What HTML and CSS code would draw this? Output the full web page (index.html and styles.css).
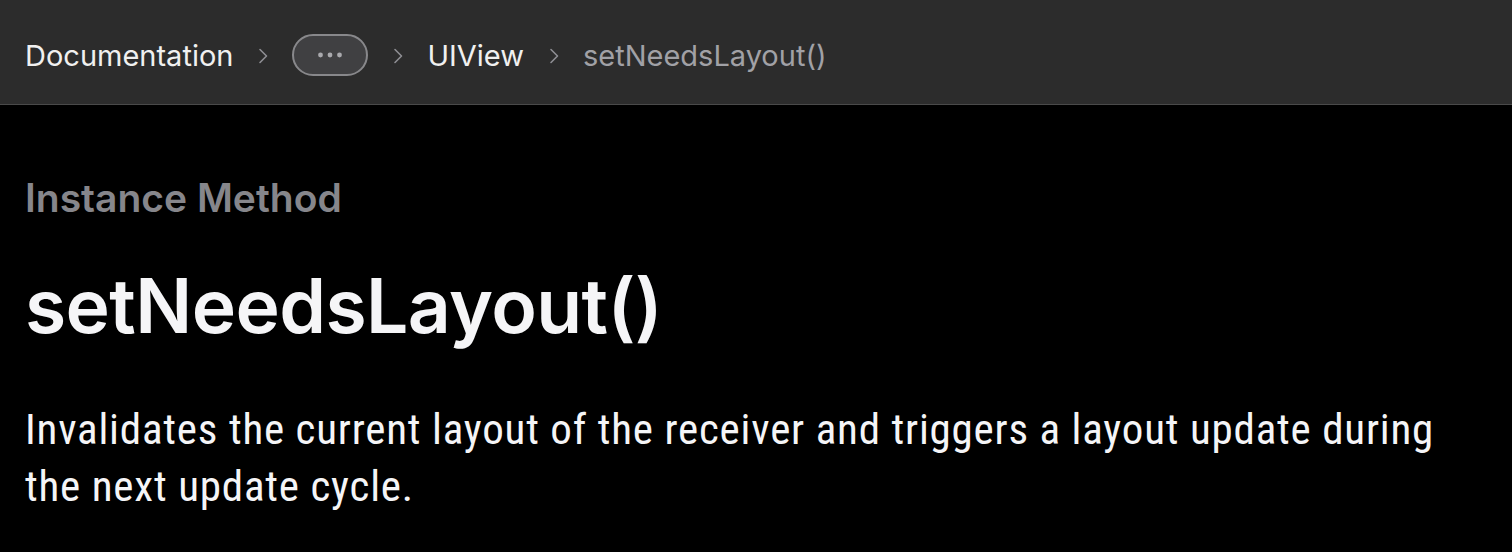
FILE: index.html
```html
<!DOCTYPE html>
<html lang="en">
<head>
<meta charset="utf-8">
<title>setNeedsLayout()</title>
<link rel="stylesheet" href="styles.css">
</head>
<body>
<nav class="crumbs">
  <span class="crumb">Documentation</span>
  <svg class="sep" width="10" height="16" viewBox="0 0 10 16"><path d="M2 1.5 L8.5 8 L2 14.5"/></svg>
  <span class="more"><svg width="24" height="6" viewBox="0 0 24 6"><circle cx="2.5" cy="3" r="2.4"/><circle cx="12" cy="3" r="2.4"/><circle cx="21.5" cy="3" r="2.4"/></svg></span>
  <svg class="sep" width="10" height="16" viewBox="0 0 10 16"><path d="M2 1.5 L8.5 8 L2 14.5"/></svg>
  <span class="crumb">UIView</span>
  <svg class="sep" width="10" height="16" viewBox="0 0 10 16"><path d="M2 1.5 L8.5 8 L2 14.5"/></svg>
  <span class="crumb current">setNeedsLayout()</span>
</nav>
<main class="content">
  <div class="eyebrow">Instance Method</div>
  <h1 class="title">setNeedsLayout()</h1>
  <p class="abstract">Invalidates the current layout of the receiver and triggers a layout update during the next update cycle.</p>
</main>
</body>
</html>
```

FILE: styles.css
```css
html, body {
  margin: 0;
  padding: 0;
  background: #000;
  font-family: Inter, "Noto Sans", sans-serif;
  color: #f5f5f7;
}
.crumbs {
  height: 105px;
  box-sizing: border-box;
  background: #2c2c2c;
  border-bottom: 1px solid #4a4a4a;
  display: flex;
  align-items: center;
  padding: 7px 0 0 25px;
  font-size: 29px;
}
.crumb {
  color: #f0f0f0;
}
.crumb.current {
  color: #a1a1a6;
}
.sep {
  flex: none;
  margin: 0 24px 0 25px;
  fill: none;
  stroke: #8e8e93;
  stroke-width: 1.6;
  stroke-linecap: round;
  stroke-linejoin: round;
}
.more {
  box-sizing: border-box;
  width: 76px;
  height: 42px;
  margin-top: -2px;
  border: 2px solid #88888b;
  border-radius: 21px;
  background: #404042;
  display: flex;
  align-items: center;
  justify-content: center;
}
.more svg {
  fill: #a9a9ad;
}
.content {
  padding: 0 25px;
}
.eyebrow {
  margin-top: 70px;
  font-size: 39px;
  line-height: 46px;
  font-weight: 600;
  color: #86868b;
}
.title {
  margin: 43px 0 0;
  font-size: 75px;
  line-height: 84px;
  font-weight: 600;
  letter-spacing: -0.6px;
}
.abstract {
  margin: 53px 0 0;
  max-width: 1440px;
  font-family: Roboto, "Noto Sans", sans-serif;
  font-stretch: 75%;
  font-size: 43px;
  line-height: 57px;
  letter-spacing: 0.8px;
}
```
